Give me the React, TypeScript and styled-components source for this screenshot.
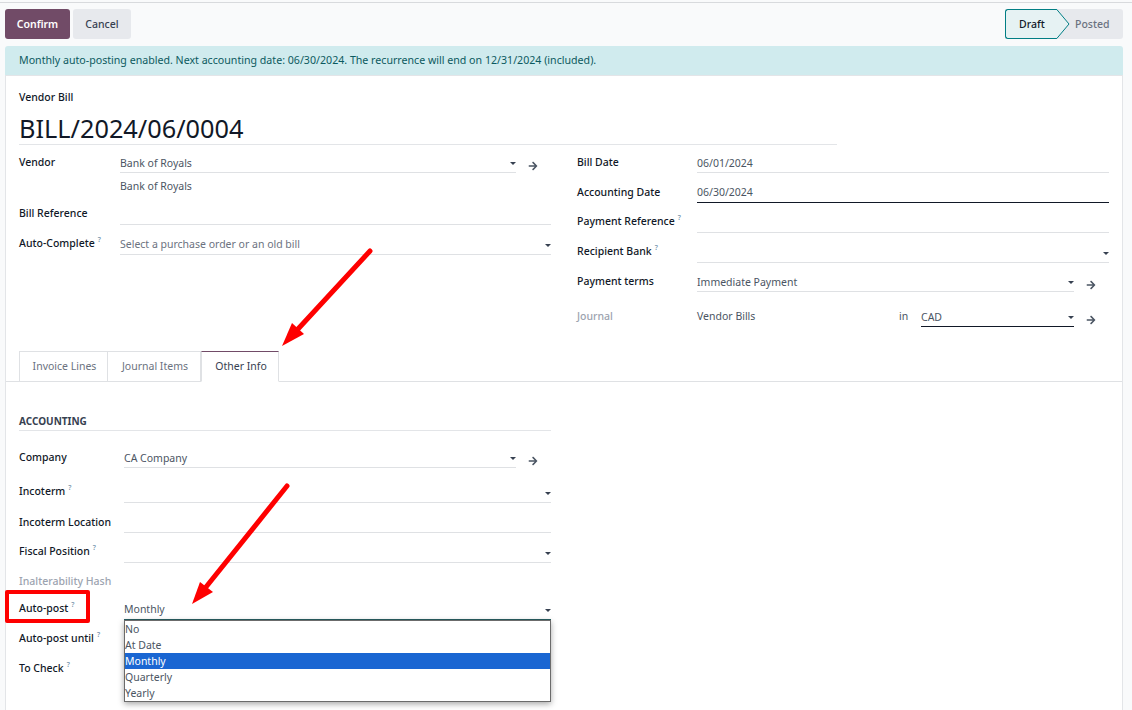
import React from "react";
import styled, { createGlobalStyle } from "styled-components";
import { FaArrowRight } from "react-icons/fa";

const Global = createGlobalStyle`
  html, body { margin: 0; padding: 0; background: #f9fafb; }
  body { font-family: "Noto Sans", "Open Sans", sans-serif; font-size: 10.5px; color: #374151; }
  * { box-sizing: border-box; }
`;

const Page = styled.div`
  position: relative;
  width: 1132px;
  height: 710px;
  overflow: hidden;
  display: flex;
  flex-direction: column;
  padding-top: 2px;
`;
const TopBar = styled.div`
  height: 44px;
  border-top: 1px solid #d8dadd;
  display: flex;
  justify-content: space-between;
  align-items: flex-start;
  padding: 6px 9px 0 5px;
`;
const Actions = styled.div`
  display: flex;
  gap: 3px;
`;
const Button = styled.div<{ $primary?: boolean }>`
  height: 30px;
  width: ${(p) => (p.$primary ? "65px" : "58px")};
  border-radius: 3px;
  display: flex;
  align-items: center;
  justify-content: center;
  font-weight: ${(p) => (p.$primary ? 600 : 500)};
  background: ${(p) => (p.$primary ? "#714b67" : "#e7e9ed")};
  color: ${(p) => (p.$primary ? "#fff" : "#374151")};
`;
const Status = styled.div`
  display: flex;
  height: 30px;
  background: #e7e9ed;
  border-radius: 3px;
  width: 118px;
`;
const Draft = styled.div`
  position: relative;
  width: 52px;
  height: 30px;
  background: #e6f2f3;
  border: 1px solid #017e84;
  border-right: 0;
  border-radius: 3px 0 0 3px;
  display: flex;
  align-items: center;
  padding-left: 13px;
  color: #111827;
  font-weight: 500;
`;
const Chevron = styled.svg`
  position: absolute;
  left: 50px;
  top: -1px;
`;
const Posted = styled.div`
  flex: 1;
  display: flex;
  align-items: center;
  padding-left: 18px;
  color: #6b7280;
  font-weight: 500;
`;
const Alert = styled.div`
  margin: 0 9px 0 5px;
  height: 29px;
  background: #d0ebee;
  border-radius: 3px 3px 0 0;
  display: flex;
  align-items: center;
  padding: 0 0 1px 14px;
  color: #0c5a60;
  font-size: 10.63px;
`;
const Card = styled.div`
  flex: 1;
  margin: 0 9px 0 5px;
  background: #fff;
  border: 1px solid #e3e5e8;
  border-bottom: 0;
  padding-top: 14px;
`;
const Sheet = styled.div`
  padding-left: 13px;
`;
const Kind = styled.div`
  font-weight: 500;
  color: #111827;
  line-height: 14px;
`;
const Title = styled.h1`
  margin: 9px 0 0;
  width: 818px;
  height: 32px;
  font-size: 25.3px;
  line-height: 30px;
  font-weight: 400;
  color: #111827;
  border-bottom: 1px solid #e3e5e8;
`;
const Columns = styled.div`
  display: flex;
  gap: 26px;
  height: 206px;
`;
const Column = styled.div`
  width: 532px;
`;
const Row = styled.div<{ $h: number; $label: number }>`
  height: ${(p) => p.$h}px;
  display: grid;
  grid-template-columns: ${(p) => p.$label}px 1fr;
  align-items: end;
`;
const Label = styled.div<{ $muted?: boolean; $lift?: boolean }>`
  font-weight: 500;
  line-height: 14px;
  padding-bottom: ${(p) => (p.$lift ? 5 : 4)}px;
  white-space: nowrap;
  color: ${(p) => (p.$muted ? "#9ca3af" : "#111827")};
`;
const Help = styled.sup`
  font-size: 7px;
  line-height: 0;
  margin-left: 3px;
  color: #6f8fa8;
  position: relative;
  top: -1px;
`;
const ValueWrap = styled.div`
  display: flex;
  align-items: flex-end;
`;
const Input = styled.div<{ $w?: number; $active?: boolean; $ph?: boolean; $open?: boolean; $high?: boolean }>`
  position: relative;
  width: ${(p) => (p.$w ? `${p.$w}px` : "100%")};
  height: 20px;
  line-height: ${(p) => (p.$open || p.$high ? 19 : 21)}px;
  border-bottom: 1px solid ${(p) => (p.$open ? "#2a5f62" : p.$active ? "#111827" : "#dfe1e4")};
  color: ${(p) => (p.$ph ? "#6b7280" : "#4b5563")};
`;
const Plain = styled.div`
  line-height: 14px;
  padding-bottom: 5px;
  color: #4b5563;
`;
const Caret = styled.span`
  position: absolute;
  right: 0;
  top: 9px;
  width: 0;
  height: 0;
  border-left: 3px solid transparent;
  border-right: 3px solid transparent;
  border-top: 3px solid #374151;
`;
const Arrow = styled.span`
  display: flex;
  margin-left: 12px;
  margin-bottom: 2px;
  color: #4b5563;
`;
const JournalRow = styled.div`
  display: flex;
  align-items: flex-end;
`;
const InWord = styled.div`
  width: 22px;
  padding-bottom: 4px;
  line-height: 14px;
  color: #4b5563;
`;
const JournalName = styled(Plain)`
  width: 202px;
  padding-bottom: 4px;
`;
const Tabs = styled.div`
  display: flex;
  height: 31px;
  padding-left: 13px;
  border-bottom: 1px solid #dfe1e4;
`;
const Tab = styled.div<{ $active?: boolean; $first?: boolean; $w: number }>`
  height: 31px;
  width: ${(p) => p.$w}px;
  display: flex;
  align-items: center;
  justify-content: center;
  padding: 0 0 1px 2px;
  background: #fff;
  border: 1px solid #dfe1e4;
  border-left-width: ${(p) => (p.$first || p.$active ? 1 : 0)}px;
  border-top-color: ${(p) => (p.$active ? "#714b67" : "#dfe1e4")};
  border-bottom-color: ${(p) => (p.$active ? "#fff" : "#dfe1e4")};
  color: ${(p) => (p.$active ? "#374151" : "#6b7280")};
`;
const Group = styled.div`
  width: 532px;
  margin-left: 13px;
  padding-top: 33px;
`;
const GroupTitle = styled.div`
  height: 16px;
  font-size: 10px;
  line-height: 13px;
  font-weight: 700;
  color: #374151;
  border-bottom: 1px solid #e3e5e8;
  margin-bottom: 9px;
`;
const Select = styled.div`
  position: absolute;
  left: 124px;
  top: 620px;
  width: 427px;
  height: 82px;
  background: #fff;
  border: 1px solid #6b6b6b;
  box-shadow: 0 2px 6px rgba(0, 0, 0, 0.35);
  z-index: 2;
`;
const Option = styled.div<{ $selected?: boolean }>`
  height: 16px;
  line-height: 16px;
  background: ${(p) => (p.$selected ? "#1a66d2" : "transparent")};
  color: ${(p) => (p.$selected ? "#fff" : "#4b5563")};
`;
const Highlight = styled.div`
  position: absolute;
  left: 5px;
  top: 590px;
  width: 85px;
  height: 33px;
  border: 4px solid #fe0000;
  border-radius: 2px;
  z-index: 3;
`;
const Annotations = styled.svg`
  position: absolute;
  left: 0;
  top: 0;
  z-index: 3;
  pointer-events: none;
`;

const Go = () => (
  <Arrow>
    <FaArrowRight size={10} />
  </Arrow>
);

const Field = ({ label, help, h, w = 101, muted, lift, children }: any) => (
  <Row $h={h} $label={w}>
    <Label $muted={muted} $lift={lift}>
      {label}
      {help && <Help>?</Help>}
    </Label>
    <ValueWrap>{children}</ValueWrap>
  </Row>
);

export default function App() {
  return (
    <Page>
      <Global />
      <TopBar>
        <Actions>
          <Button $primary>Confirm</Button>
          <Button>Cancel</Button>
        </Actions>
        <Status>
          <Draft>
            Draft
            <Chevron width="20" height="30" viewBox="0 0 20 30">
              <path d="M0 0.5 L0.8 0.5 L13 15 L0.8 29.5 L0 29.5" fill="#e6f2f3" stroke="#017e84" strokeWidth="1" />
            </Chevron>
          </Draft>
          <Posted>Posted</Posted>
        </Status>
      </TopBar>
      <Alert>Monthly auto-posting enabled. Next accounting date: 06/30/2024. The recurrence will end on 12/31/2024 (included).</Alert>
      <Card>
        <Sheet>
          <Kind>Vendor Bill</Kind>
          <Title>BILL/2024/06/0004</Title>
          <Columns>
            <Column>
              <Field label="Vendor" h={28}>
                <Input $w={396}>Bank of Royals<Caret /></Input>
                <Go />
              </Field>
              <Field label="" h={25}><Plain>Bank of Royals</Plain></Field>
              <Field label="Bill Reference" lift h={27}><Input /></Field>
              <Field label="Auto-Complete" help lift h={30}>
                <Input $ph $high>Select a purchase order or an old bill<Caret /></Input>
              </Field>
            </Column>
            <Column>
              <Field label="Bill Date" h={28} w={120}><Input>06/01/2024</Input></Field>
              <Field label="Accounting Date" h={30} w={120}><Input $active $high>06/30/2024</Input></Field>
              <Field label="Payment Reference" help lift h={30} w={120}><Input /></Field>
              <Field label="Recipient Bank" help lift h={30} w={120}><Input><Caret /></Input></Field>
              <Field label="Payment terms" h={29} w={120}>
                <Input $w={377}>Immediate Payment<Caret /></Input>
                <Go />
              </Field>
              <Field label="Journal" muted h={35} w={120}>
                <JournalRow>
                  <JournalName>Vendor Bills</JournalName>
                  <InWord>in</InWord>
                  <Input $w={153} $active>CAD<Caret /></Input>
                  <Go />
                </JournalRow>
              </Field>
            </Column>
          </Columns>
        </Sheet>
        <Tabs>
          <Tab $w={89} $first>Invoice Lines</Tab>
          <Tab $w={93}>Journal Items</Tab>
          <Tab $w={78} $active>Other Info</Tab>
        </Tabs>
        <Group>
          <GroupTitle>ACCOUNTING</GroupTitle>
          <Field label="Company" h={28} w={105}>
            <Input $w={392}>CA Company<Caret /></Input>
            <Go />
          </Field>
          <Field label="Incoterm" help lift h={35} w={105}><Input><Caret /></Input></Field>
          <Field label="Incoterm Location" h={30} w={105}><Input /></Field>
          <Field label="Fiscal Position" help lift h={30} w={105}><Input><Caret /></Input></Field>
          <Field label="Inalterability Hash" muted h={29} w={105}><Plain /></Field>
          <Field label="Auto-post" help lift h={28} w={105}>
            <Input $open>Monthly<Caret /></Input>
          </Field>
          <Field label="Auto-post until" help h={29} w={105}><Plain /></Field>
          <Field label="To Check" help h={30} w={105}><Plain /></Field>
        </Group>
      </Card>
      <Select>
        <Option>No</Option>
        <Option>At Date</Option>
        <Option $selected>Monthly</Option>
        <Option>Quarterly</Option>
        <Option>Yearly</Option>
      </Select>
      <Highlight />
      <Annotations width="1132" height="710" viewBox="0 0 1132 710">
        <path d="M370 251 L298 329" stroke="#fe0000" strokeWidth="5" strokeLinecap="round" fill="none" />
        <path d="M282 346 L292 323 L304 334 Z" fill="#fe0000" />
        <path d="M287 486 L206 587" stroke="#fe0000" strokeWidth="5" strokeLinecap="round" fill="none" />
        <path d="M192 604 L200 582 L213 592 Z" fill="#fe0000" />
      </Annotations>
    </Page>
  );
}
